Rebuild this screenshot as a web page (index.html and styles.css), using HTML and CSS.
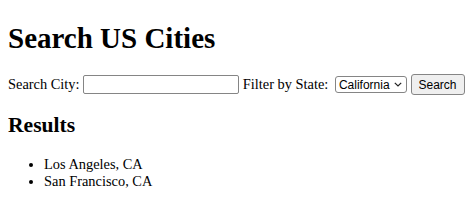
FILE: index.html
```html
<!DOCTYPE html>
<html lang="en">
<head>
    <meta charset="UTF-8">
    <meta name="viewport" content="width=device-width, initial-scale=1.0">
    <title>Search US Cities</title>
    <link rel="stylesheet" href="styles.css">
</head>
<body>

    <h1 class="page-title">Search US Cities</h1>

    <!-- Search form -->
    <div class="search-bar">
        <label for="city">Search City:</label>
        <input type="text" id="city">
        <label for="state">Filter by State:</label>
        <span class="select-wrap">
            <select id="state">
                <option>California</option>
            </select>
            <svg class="chevron" width="8" height="5" viewBox="0 0 8 5">
                <path d="M0.8 0.8 L4 4 L7.2 0.8" fill="none" stroke="#222" stroke-width="1.2"/>
            </svg>
        </span>
        <button class="search-btn">Search</button>
    </div>

    <h2 class="results-title">Results</h2>
    <ul class="results">
        <li>Los Angeles, CA</li>
        <li>San Francisco, CA</li>
    </ul>

</body>
</html>
```

FILE: styles.css
```css
/* Base */
body {
    margin: 8px;
    font-family: "Liberation Serif", "Times New Roman", serif;
    font-size: 14.4px;
    color: #000;
    background: #fff;
}

.page-title {
    font-size: 29px;
    margin: 14px 0 19.4px;
}

.search-bar {
    white-space: nowrap;
}

input,
select,
button {
    font-family: "Liberation Sans", Arial, sans-serif;
    font-size: 12px;
    color: #000;
    box-sizing: border-box;
    vertical-align: baseline;
}

#city {
    width: 156px;
    height: 19px;
    padding: 1px 2px;
    border: 1px solid #858585;
    border-radius: 2px;
}

/* Select with own arrow */
.select-wrap {
    position: relative;
    display: inline-block;
    margin-left: 3px;
}

#state {
    -webkit-appearance: none;
    appearance: none;
    width: 72px;
    height: 17px;
    padding: 0 0 0 3px;
    border: 1px solid #858585;
    border-radius: 3px;
    background: #fff;
}

.chevron {
    position: absolute;
    right: 5px;
    top: 6px;
}

.search-btn {
    width: 54px;
    height: 21px;
    padding: 1px 6px;
    border: 1px solid #858585;
    border-radius: 3px;
    background: #efefef;
}

/* Results */
.results-title {
    font-size: 21.6px;
    margin: 17.9px 0;
}

.results {
    margin: 14.4px 0;
    padding-left: 36px;
}
```
